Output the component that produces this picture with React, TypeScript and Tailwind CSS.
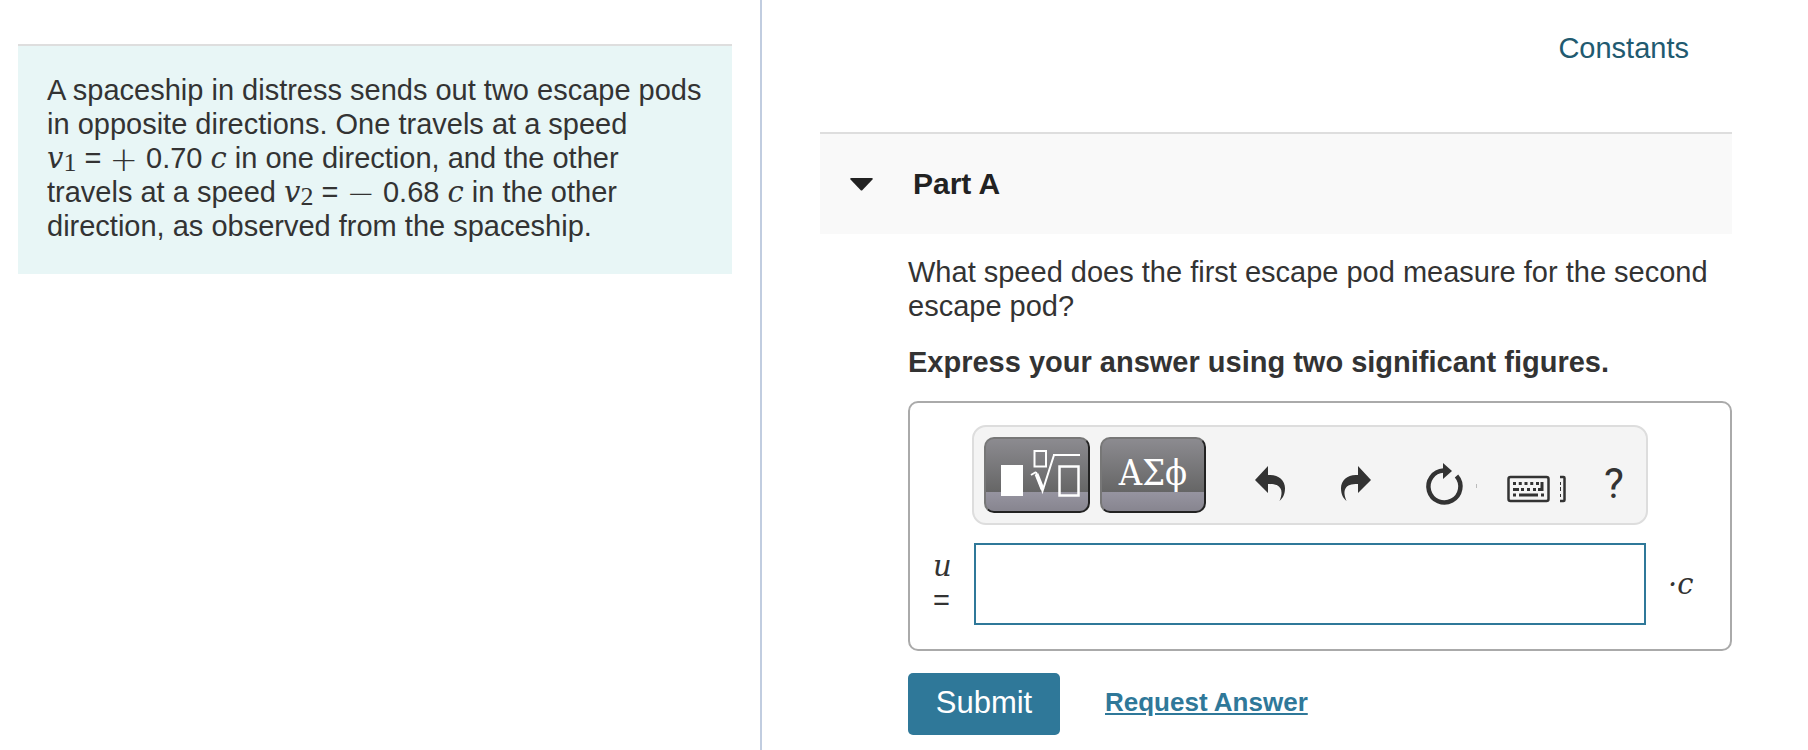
import type { ReactNode } from 'react';

function MathVar({ name, sub }: { name: string; sub?: string }) {
  return (
    <span className="leading-[0]">
      <i className="font-['DejaVu_Serif',serif]">{name}</i>
      {sub && (
        <span className="relative top-[3px] font-['Liberation_Serif',serif] text-[26px]">{sub}</span>
      )}
    </span>
  );
}

function MathSign({ children }: { children: ReactNode }) {
  return (
    <span className="relative top-[3px] font-['DejaVu_Sans',sans-serif] text-[34px] font-extralight leading-[0]">
      {children}
    </span>
  );
}

function ProblemStatement() {
  return (
    <section className="mt-11 mr-7 ml-[18px] border-t-2 border-[#dedede] bg-[#e8f6f6] pt-[27px] pr-7 pb-[31px] pl-[29px]">
      <p>
        A spaceship in distress sends out two escape pods in opposite directions. One travels at a
        speed{' '}
        <span className="whitespace-nowrap">
          <MathVar name="v" sub="1" /> = <MathSign>+</MathSign> 0.70 <MathVar name="c" />
        </span>{' '}
        in one direction, and the other travels at a speed{' '}
        <span className="whitespace-nowrap">
          <MathVar name="v" sub="2" /> = <MathSign>−</MathSign> 0.68 <MathVar name="c" />
        </span>{' '}
        in the other direction, as observed from the spaceship.
      </p>
    </section>
  );
}

function PaletteButton({ label, children }: { label: string; children: ReactNode }) {
  return (
    <button
      type="button"
      aria-label={label}
      className="flex h-19 w-[106px] shrink-0 items-center justify-center rounded-[10px] border-2 border-t-[#777] border-r-[#222] border-b-[#222] border-l-[#777] bg-[linear-gradient(#8c8b90_0%,#666_73%,#9694a0_74%,#87858f_100%)] text-white"
    >
      {children}
    </button>
  );
}

function ToolButton({ label, children }: { label: string; children: ReactNode }) {
  return (
    <button
      type="button"
      aria-label={label}
      className="flex size-[52px] shrink-0 items-center justify-center"
    >
      {children}
    </button>
  );
}

function TemplatesIcon() {
  return (
    <svg width="102" height="72" viewBox="0 0 102 72" fill="none" stroke="#fff" strokeWidth="2">
      <rect x="15" y="26" width="22" height="31" fill="#fff" stroke="none" />
      <rect x="48.500" y="12" width="11.500" height="15.500" />
      <path d="M45 36l5-3M67 16h27" />
      <path d="M50 33l6.500 19L68 16" />
      <path d="M50.500 35l6 15" strokeWidth="4" />
      <rect x="73.500" y="27.500" width="19" height="29" strokeWidth="2.500" />
    </svg>
  );
}

function UndoIcon() {
  return (
    <svg width="30" height="36" viewBox="0 0 30 36" fill="#333">
      <path d="M0 14L13 0V9C23 8 30 14 30 22C30 28 28 32 24.500 35C27 29 27 25 25.500 22.500C23.500 19 20 18 13 18V27Z" />
    </svg>
  );
}

function RedoIcon() {
  return (
    <svg width="30" height="36" viewBox="0 0 30 36" fill="#333">
      <path d="M30 14L17 0V9C7 8 0 14 0 22C0 28 2 32 5.500 35C3 29 3 25 4.500 22.500C6.500 19 10 18 17 18V27Z" />
    </svg>
  );
}

function ResetIcon() {
  return (
    <svg width="52" height="52" viewBox="0 0 52 52" className="overflow-visible">
      <path d="M27.500 12.500A16 16 0 1 0 40.500 18" fill="none" stroke="#333" strokeWidth="4.500" />
      <path d="M27 5L36 13L27 21Z" fill="#333" />
      <path d="M60.500 26v4" stroke="#bbb" />
    </svg>
  );
}

function KeyboardIcon() {
  return (
    <svg width="52" height="52" viewBox="0 0 52 52" fill="none" stroke="#333" className="overflow-visible">
      <rect x="6.500" y="19" width="40" height="24" rx="2" strokeWidth="2.500" />
      <path d="M11 25.500h26" strokeWidth="3" strokeDasharray="3 2.750" />
      <path d="M11 31.500h6M19 31.500h3M25 31.500h3M31 31.500h3" strokeWidth="3" />
      <path d="M40 24v7.500h-4" strokeWidth="3" />
      <path d="M11 37h3M17 37h19M39 37h3" strokeWidth="3" />
      <path d="M58 19h3.500q1 0 1 1v22q0 1-1 1h-3.500" strokeWidth="2.500" />
      <path d="M58.500 24v3M58.500 29v4M58.500 36v3" strokeWidth="1" />
    </svg>
  );
}

function Toolbar() {
  return (
    <div className="flex items-end gap-2.5 rounded-[14px] border-2 border-[#ddd] bg-[#f4f4f4] py-2.5 pl-2.5">
      <PaletteButton label="Templates">
        <TemplatesIcon />
      </PaletteButton>
      <PaletteButton label="Symbols">
        <span className="pb-1 font-['DejaVu_Serif_Condensed','DejaVu_Serif',serif] text-[36px] leading-none">
          ΑΣϕ
        </span>
      </PaletteButton>
      <div className="mb-[3px] ml-7 flex gap-[34px]">
        <ToolButton label="Undo">
          <UndoIcon />
        </ToolButton>
        <ToolButton label="Redo">
          <RedoIcon />
        </ToolButton>
        <ToolButton label="Reset">
          <ResetIcon />
        </ToolButton>
        <ToolButton label="Keyboard shortcuts">
          <KeyboardIcon />
        </ToolButton>
        <ToolButton label="Help">
          <span className="font-[Roboto,sans-serif] text-[42px] leading-none">?</span>
        </ToolButton>
      </div>
    </div>
  );
}

function AnswerBox() {
  return (
    <div className="mt-[22px] grid grid-cols-[42px_1fr_82px] gap-y-[18px] rounded-[10px] border-2 border-[#aaa] pt-[22px] pb-6 pl-5">
      <div className="col-start-2">
        <Toolbar />
      </div>
      <label htmlFor="answer" className="col-start-1 flex flex-col pt-1.5 pl-[3px]">
        <span>
          <MathVar name="u" />
        </span>
        <span>=</span>
      </label>
      <input
        id="answer"
        type="text"
        className="mx-0.5 h-[82px] min-w-0 border-2 border-[#2f7899] bg-white px-3 outline-none"
      />
      <span className="self-center pl-5">
        <MathVar name="·c" />
      </span>
    </div>
  );
}

export default function App() {
  return (
    <div className="grid min-h-screen grid-cols-[381fr_523fr] bg-white font-['Liberation_Sans',Arial,sans-serif] text-[29px] leading-[34px] text-[#333]">
      <div className="border-r-2 border-[#c1cde0]">
        <ProblemStatement />
      </div>

      <main className="pr-19 pb-3 pl-[58px]">
        <div className="flex justify-end pt-[31px] pr-[43px]">
          <a href="#constants" className="text-[#215a70]">
            Constants
          </a>
        </div>

        <button
          type="button"
          aria-expanded="true"
          className="mt-[67px] flex h-[102px] w-full items-center border-t-2 border-[#dedede] bg-[#f9f9f9] pl-[30px] text-[30px] font-bold text-[#222]"
        >
          <svg width="23" height="13" viewBox="0 0 23 13" fill="#222">
            <path d="M1.500 0h20q2 0 1 1.500L12.500 12q-1 1-2 0L.5 1.500q-1-1.500 1-1.500z" />
          </svg>
          <span className="pl-10">Part A</span>
        </button>

        <div className="pt-[21px] pl-[88px]">
          <p>What speed does the first escape pod measure for the second escape pod?</p>
          <p className="mt-[22px] font-bold">Express your answer using two significant figures.</p>

          <AnswerBox />

          <div className="mt-[22px] flex items-center gap-[45px]">
            <button
              type="submit"
              className="h-[62px] w-[152px] rounded-[5px] bg-[#2f7899] pb-0.5 text-[31px] text-white"
            >
              Submit
            </button>
            <a href="#answer" className="pb-1 text-[26px] font-bold text-[#2f7899] underline">
              Request Answer
            </a>
          </div>
        </div>
      </main>
    </div>
  );
}
